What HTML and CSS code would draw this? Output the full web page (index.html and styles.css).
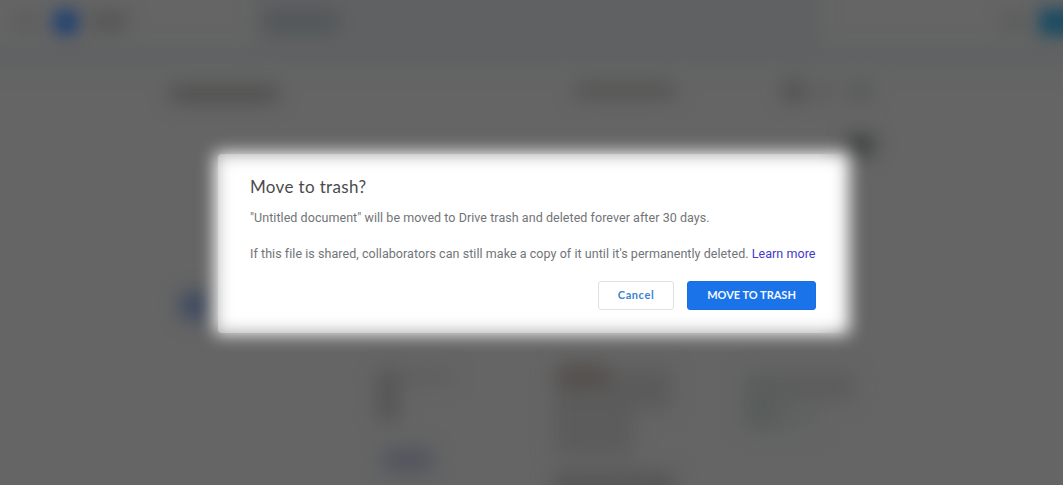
FILE: index.html
```html
<!DOCTYPE html>
<html lang="en">
<head>
<meta charset="utf-8">
<title>Move to trash?</title>
<link rel="stylesheet" href="styles.css">
</head>
<body>
<div class="screen">
  <svg class="backdrop" viewBox="0 0 1063 485" aria-hidden="true">
    <defs>
      <filter id="soft" filterUnits="userSpaceOnUse" x="-60" y="-60" width="1183" height="605" color-interpolation-filters="sRGB"><feGaussianBlur stdDeviation="10"/></filter>
      <filter id="accent" filterUnits="userSpaceOnUse" x="-60" y="-60" width="1183" height="605" color-interpolation-filters="sRGB"><feGaussianBlur stdDeviation="8"/></filter>
      <filter id="glow" filterUnits="userSpaceOnUse" x="150" y="100" width="800" height="300" color-interpolation-filters="sRGB"><feGaussianBlur stdDeviation="8.5"/></filter>
    </defs>
    <g filter="url(#soft)">
      <rect x="256" y="-24" width="564" height="78" fill="#5f6162"/>
      <rect x="-30" y="48" width="1130" height="18" fill="#5f6162"/>
      <rect x="262" y="12" width="76" height="19" fill="#515557"/>
      <rect x="16" y="15" width="20" height="14" fill="#575757"/>
      <rect x="92" y="14" width="34" height="15" fill="#505050"/>
      <rect x="170" y="87" width="108" height="14" fill="#4b4b4a"/>
      <rect x="575" y="84" width="100" height="13" fill="#4f504e"/>
      <rect x="784" y="82" width="20" height="18" fill="#4c4c4c"/>
      <rect x="817" y="85" width="16" height="13" fill="#585858"/>
      <rect x="850" y="83" width="20" height="16" fill="#545656"/>
      <rect x="1003" y="15" width="22" height="14" fill="#565757"/>
      <rect x="378" y="371" width="20" height="50" fill="#545454"/>
      <rect x="398" y="371" width="55" height="11" fill="#5c5c5c"/>
      <rect x="383" y="449" width="50" height="22" fill="#50545d"/>
      <rect x="554" y="368" width="118" height="42" fill="#5b5b5b"/>
      <rect x="558" y="366" width="50" height="17" fill="#504b46"/>
      <rect x="554" y="410" width="80" height="46" fill="#5c5c5c"/>
      <rect x="554" y="472" width="120" height="30" fill="#565656"/>
      <rect x="744" y="373" width="110" height="28" fill="#5c5c5c"/>
      <rect x="744" y="378" width="42" height="52" fill="#595d5c"/>
      <rect x="780" y="405" width="40" height="25" fill="#606261"/>
      <rect x="182" y="293" width="24" height="25" fill="#364460"/>
      <rect x="848" y="136" width="26" height="18" fill="#363b39"/>
    </g>
    <g filter="url(#glow)">
      <rect x="215" y="153" width="634" height="181" fill="#fff"/>
    </g>
    <g filter="url(#accent)">
      <circle cx="66" cy="22" r="14" fill="#244370"/>
      <rect x="1039" y="8" width="60" height="28" fill="#1d4c62"/>
    </g>
  </svg>

  <main class="dialog" role="dialog" aria-labelledby="title">
    <h1 class="title" id="title">Move to trash?</h1>
    <p class="message">"Untitled document" will be moved to Drive trash and deleted forever after 30 days.</p>
    <p class="message shared">If this file is shared, collaborators can still make a copy of it until it's permanently deleted. <a class="link">Learn more</a></p>
    <div class="actions">
      <button class="button cancel">Cancel</button>
      <button class="button confirm">MOVE TO TRASH</button>
    </div>
  </main>
</div>
</body>
</html>
```
FILE: styles.css
```css
* { box-sizing: border-box; }
body { margin: 0; background: #656565; overflow: hidden; }
.screen {
  display: flex;
  width: 1063px;
  height: 485px;
  padding: 154px 0 0 218px;
  position: relative;
  font-family: Roboto, "Liberation Sans", sans-serif;
}
.backdrop { position: absolute; inset: 0; width: 1063px; height: 485px; }
.dialog {
  position: relative;
  width: 632px;
  height: 179px;
  padding: 21px 34px 0 32px;
  border-radius: 4px 0 0 4px;
  background: linear-gradient(to right, rgba(255,255,255,.3) 0, rgba(255,255,255,.3) 600px, rgba(255,255,255,0) 628px);
}
.title {
  margin: 0;
  color: #4a4b4d;
  font: 400 17px/24px Lato, sans-serif;
  letter-spacing: .35px;
  white-space: nowrap;
}
.message {
  margin: 10px 0 0;
  color: #717477;
  font-size: 12.5px;
  line-height: 18px;
  letter-spacing: .055px;
  white-space: nowrap;
}
.shared { margin-top: 18px; }
.link { color: #4339cc; }
.actions {
  display: flex;
  justify-content: flex-end;
  gap: 13px;
  margin-top: 18px;
}
.button {
  height: 29px;
  padding: 0 0 1px;
  border-radius: 3px;
  font: 700 11px/26px Lato, sans-serif;
  white-space: nowrap;
}
.cancel { width: 76px; border: 1px solid #dfe1e5; background: #fff; color: #3c83d2; letter-spacing: .6px; }
.confirm { width: 129px; border: 1px solid #1a6fe0; background: #1a73e8; color: #f4f8ff; }
```
